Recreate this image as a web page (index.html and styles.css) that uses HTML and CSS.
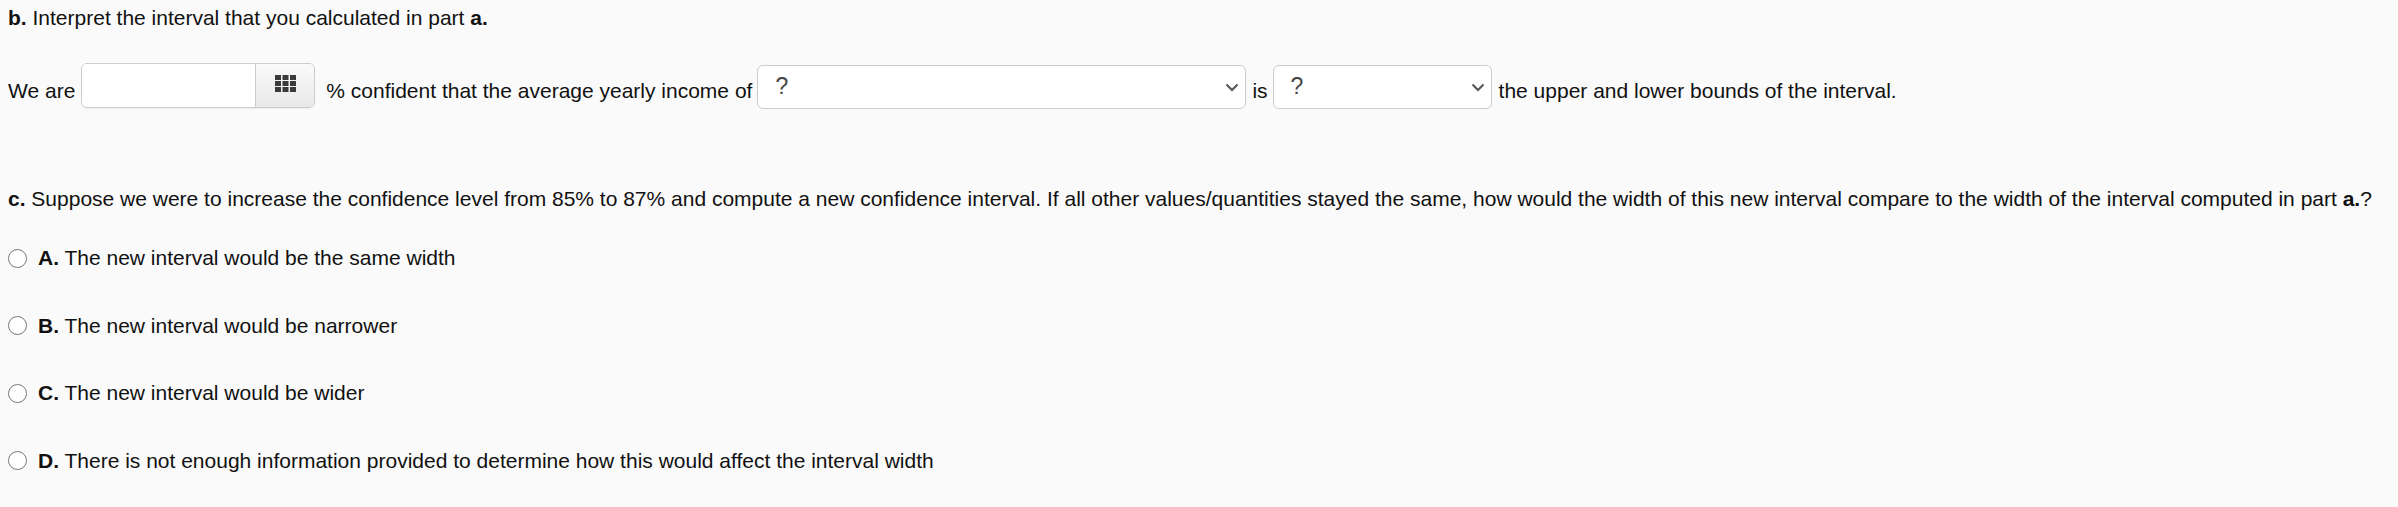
FILE: index.html
```html
<!DOCTYPE html>
<html lang="en">
<head>
    <meta charset="UTF-8">
    <title>Confidence interval question</title>
    <link rel="stylesheet" href="styles.css">
</head>
<body>
    <div class="container">
        <p class="part-title"><b>b.</b> Interpret the interval that you calculated in part <b>a.</b></p>

        <div class="answer-row">
            <span>We are</span>
            <div class="input-group">
                <input type="text" class="num-input">
                <button class="grid-btn" type="button">
                    <svg width="21" height="17" viewBox="0 0 21 17">
                        <g fill="#3a3a3a">
                            <rect x="0" y="0" width="6" height="5"/><rect x="7.5" y="0" width="6" height="5"/><rect x="15" y="0" width="6" height="5"/>
                            <rect x="0" y="6" width="6" height="5"/><rect x="7.5" y="6" width="6" height="5"/><rect x="15" y="6" width="6" height="5"/>
                            <rect x="0" y="12" width="6" height="5"/><rect x="7.5" y="12" width="6" height="5"/><rect x="15" y="12" width="6" height="5"/>
                        </g>
                    </svg>
                </button>
            </div>
            <span class="after-input">% confident that the average yearly income of</span>
            <div class="drop drop-wide">
                <span class="drop-value">?</span>
                <svg class="chevron" width="14" height="9" viewBox="0 0 14 9"><path d="M1.5 1.5 L7 7 L12.5 1.5" fill="none" stroke="#555" stroke-width="2"/></svg>
            </div>
            <span>is</span>
            <div class="drop drop-small">
                <span class="drop-value">?</span>
                <svg class="chevron" width="14" height="9" viewBox="0 0 14 9"><path d="M1.5 1.5 L7 7 L12.5 1.5" fill="none" stroke="#555" stroke-width="2"/></svg>
            </div>
            <span>the upper and lower bounds of the interval.</span>
        </div>

        <p class="part-title part-c"><b>c.</b> Suppose we were to increase the confidence level from 85% to 87% and compute a new confidence interval. If all other values/quantities stayed the same, how would the width of this new interval compare to the width of the interval computed in part <b>a.</b>?</p>

        <ul class="choices">
            <li><span class="radio"></span><span><b>A.</b> The new interval would be the same width</span></li>
            <li><span class="radio"></span><span><b>B.</b> The new interval would be narrower</span></li>
            <li><span class="radio"></span><span><b>C.</b> The new interval would be wider</span></li>
            <li><span class="radio"></span><span><b>D.</b> There is not enough information provided to determine how this would affect the interval width</span></li>
        </ul>
    </div>
</body>
</html>
```

FILE: styles.css
```css
html, body {
    margin: 0;
    padding: 0;
    height: 100%;
    background-color: #fafafa;
}
body {
    font-family: "Liberation Sans", Arial, sans-serif;
    font-size: 21px;
    color: #111;
    overflow: hidden;
}
.container {
    padding: 6px 8px 0;
}
.part-title {
    margin: 0;
    line-height: 24px;
    white-space: nowrap;
}
.answer-row {
    display: flex;
    align-items: flex-start;
    margin-top: 33px;
    white-space: nowrap;
}
.answer-row > span {
    line-height: 24px;
    margin-top: 16px;
}
.input-group {
    display: flex;
    width: 234px;
    height: 45px;
    margin-left: 6px;
    border: 1px solid #ccc;
    border-radius: 6px;
    box-sizing: border-box;
    overflow: hidden;
    box-shadow: 0 1px 1px rgba(0, 0, 0, 0.05);
}
.num-input {
    flex: 1;
    min-width: 0;
    border: 0;
    padding: 0;
    background-color: #fff;
}
.grid-btn {
    width: 59px;
    padding: 0 0 4px;
    border: 0;
    border-left: 1px solid #ccc;
    background: linear-gradient(#fafafa, #e8e8e8);
    display: flex;
    align-items: center;
    justify-content: center;
}
.after-input {
    margin-left: 11px;
}
.drop {
    display: flex;
    align-items: center;
    justify-content: space-between;
    box-sizing: border-box;
    height: 44px;
    margin: 2px 6px 0 5px;
    padding: 0 6px 2px 17px;
    background-color: #fff;
    border: 1px solid #ccc;
    border-radius: 6px;
    color: #444;
    font-size: 23px;
}
.drop-wide {
    width: 489px;
}
.drop-small {
    width: 219px;
    margin-right: 7px;
}
.chevron {
    margin-top: 2px;
}
.part-c {
    margin-top: 78px;
}
.choices {
    list-style-type: none;
    margin: 35px 0 0;
    padding: 0;
}
.choices li {
    display: flex;
    align-items: center;
    gap: 11px;
    height: 24px;
    margin-bottom: 43.5px;
    white-space: nowrap;
}
.radio {
    width: 19px;
    height: 19px;
    box-sizing: border-box;
    border: 1px solid #777;
    border-radius: 50%;
    background-color: #fff;
}
```
